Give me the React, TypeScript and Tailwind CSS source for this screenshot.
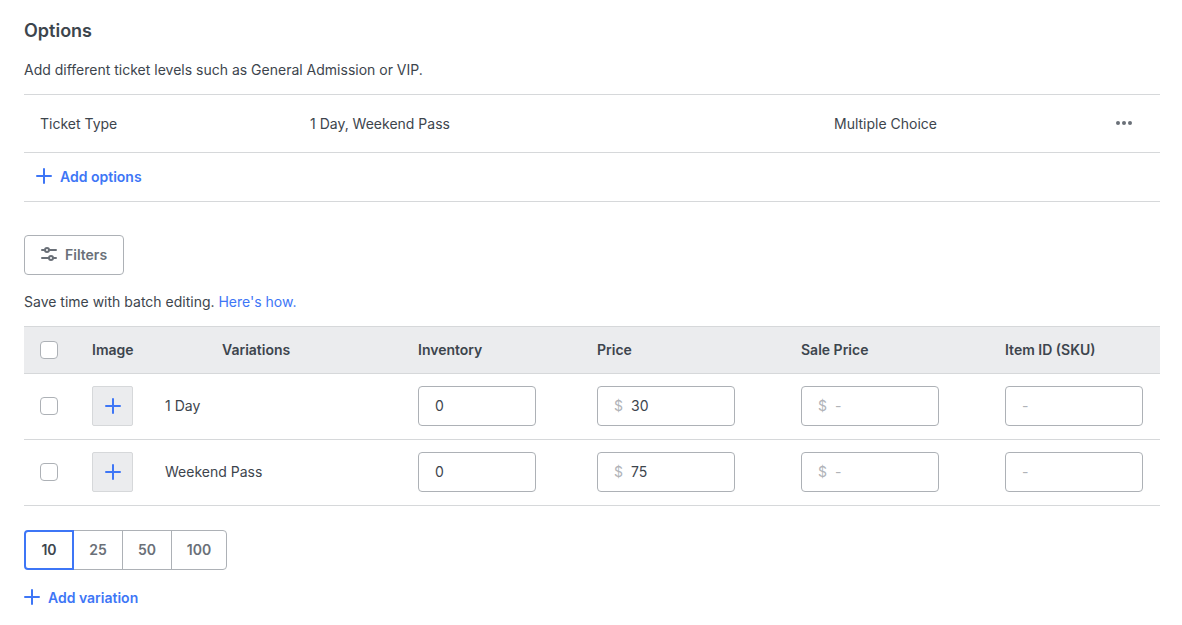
import { useState } from "react";
import clsx from "clsx";

const variations = [
    { name: "1 Day", inventory: "0", price: "30" },
    { name: "Weekend Pass", inventory: "0", price: "75" },
];

const pageSizes = [10, 25, 50, 100];

function PlusIcon({ className }: { className?: string }) {
    return (
        <svg className={className} width="16" height="16" viewBox="0 0 16 16" fill="none" stroke="currentColor" strokeWidth="2" strokeLinecap="round" aria-hidden="true">
            <path d="M8 1v14M1 8h14" />
        </svg>
    );
}

function FiltersIcon({ className }: { className?: string }) {
    return (
        <svg className={className} width="16" height="16" viewBox="0 0 16 16" fill="none" stroke="currentColor" strokeWidth="2" strokeLinecap="round" aria-hidden="true">
            <path d="M1 4h3M8 4h7M1 12h7M12 12h3" />
            <circle cx="6" cy="4" r="2" />
            <circle cx="10" cy="12" r="2" />
        </svg>
    );
}

function DotsIcon({ className }: { className?: string }) {
    return (
        <svg className={className} width="16" height="4" viewBox="0 0 16 4" fill="currentColor" aria-hidden="true">
            <circle cx="2" cy="2" r="2" />
            <circle cx="8" cy="2" r="2" />
            <circle cx="14" cy="2" r="2" />
        </svg>
    );
}

function Checkbox({ label }: { label: string }) {
    return (
        <input
            type="checkbox"
            aria-label={label}
            className="block size-[18px] appearance-none rounded border border-[#adb1b6] bg-white checked:bg-[#3e76f6]"
        />
    );
}

function Field({ label, value = "", money = false, width }: { label: string; value?: string; money?: boolean; width: string }) {
    return (
        <label className={clsx("flex h-10 items-center gap-2 rounded border border-[#adb1b6] bg-white px-4", width)}>
            {money && <span className="text-[#b0b3b8]">$</span>}
            <input
                type="text"
                aria-label={label}
                defaultValue={value}
                placeholder="-"
                className="w-full min-w-0 bg-transparent outline-none placeholder:text-[#b0b3b8]"
            />
        </label>
    );
}

export default function App() {
    const [pageSize, setPageSize] = useState(10);

    return (
        <main className="bg-white pt-5 pr-[22px] pb-4 pl-6 font-['Inter',sans-serif] text-sm leading-5 text-[#3d454d]">
            <h1 className="text-lg leading-[22px] font-semibold">Options</h1>
            <p className="mt-[18px]">Add different ticket levels such as General Admission or VIP.</p>

            {/* Option sets */}
            <table className="mt-[14px] w-full table-fixed border-separate border-spacing-0 border-t border-[#d6d8da]">
                <tbody>
                    <tr className="h-[58px]">
                        <td className="w-[270px] border-b border-[#d6d8da] px-4">Ticket Type</td>
                        <td className="border-b border-[#d6d8da] px-4">1 Day, Weekend Pass</td>
                        <td className="w-[256px] border-b border-[#d6d8da] px-4">Multiple Choice</td>
                        <td className="w-[86px] border-b border-[#d6d8da] pr-7">
                            <button type="button" aria-label="More actions" className="ml-auto flex h-6 items-center text-[#6a7078]">
                                <DotsIcon className="mb-0.5" />
                            </button>
                        </td>
                    </tr>
                    <tr className="h-[49px]">
                        <td colSpan={4} className="border-b border-[#d6d8da] px-3">
                            <button type="button" className="flex items-center gap-2 font-semibold text-[#3e76f6]">
                                <PlusIcon className="mb-0.5" />
                                Add options
                            </button>
                        </td>
                    </tr>
                </tbody>
            </table>

            <button type="button" className="mt-[33px] flex h-10 items-center gap-2 rounded border border-[#adb1b6] px-4 font-semibold text-[#6a7078]">
                <FiltersIcon className="mb-0.5" />
                Filters
            </button>

            <p className="mt-[17px]">
                Save time with batch editing. <a href="#batch-editing" className="text-[#3e76f6]">Here's how.</a>
            </p>

            {/* Variations */}
            <table className="mt-[14px] w-full table-fixed border-separate border-spacing-0 border-t border-[#d6d8da] text-left">
                <thead>
                    <tr className="h-[47px] bg-[#ebecee] *:border-b *:border-[#d6d8da] *:pl-4 *:font-semibold">
                        <th className="w-[52px]"><Checkbox label="Select all variations" /></th>
                        <th className="w-[73px]">Image</th>
                        <th><span className="pl-[57px]">Variations</span></th>
                        <th className="w-[179px]">Inventory</th>
                        <th className="w-[204px]">Price</th>
                        <th className="w-[204px]">Sale Price</th>
                        <th className="w-[171px]">Item ID (SKU)</th>
                    </tr>
                </thead>
                <tbody>
                    {variations.map((v) => (
                        <tr key={v.name} className="h-[66px] *:border-b *:border-[#d6d8da] *:pb-0.5 *:pl-4">
                            <td><Checkbox label={`Select ${v.name}`} /></td>
                            <td>
                                <button
                                    type="button"
                                    aria-label={`Add image for ${v.name}`}
                                    className="flex h-10 w-[41px] items-center justify-center rounded-xs border border-[#d6d8da] bg-[#ebecee] text-[#3e76f6]"
                                >
                                    <PlusIcon />
                                </button>
                            </td>
                            <td>{v.name}</td>
                            <td><Field label={`${v.name} inventory`} value={v.inventory} width="w-[118px]" /></td>
                            <td><Field label={`${v.name} price`} value={v.price} money width="w-[138px]" /></td>
                            <td><Field label={`${v.name} sale price`} money width="w-[138px]" /></td>
                            <td><Field label={`${v.name} SKU`} width="w-[138px]" /></td>
                        </tr>
                    ))}
                </tbody>
            </table>

            {/* Page size */}
            <div className="mt-6 flex">
                {pageSizes.map((size) => (
                    <button
                        key={size}
                        type="button"
                        aria-pressed={size === pageSize}
                        onClick={() => setPageSize(size)}
                        className={clsx(
                            "-mr-px flex h-10 w-[50px] items-center justify-center font-semibold first:rounded-l last:w-14 last:rounded-r",
                            size === pageSize ? "z-10 border-2 border-[#3e76f6]" : "border border-[#adb1b6] text-[#6a7078]"
                        )}
                    >
                        {size}
                    </button>
                ))}
            </div>

            <button type="button" className="mt-[18px] flex items-center gap-2 font-semibold text-[#3e76f6]">
                <PlusIcon className="mb-0.5" />
                Add variation
            </button>
        </main>
    );
}
